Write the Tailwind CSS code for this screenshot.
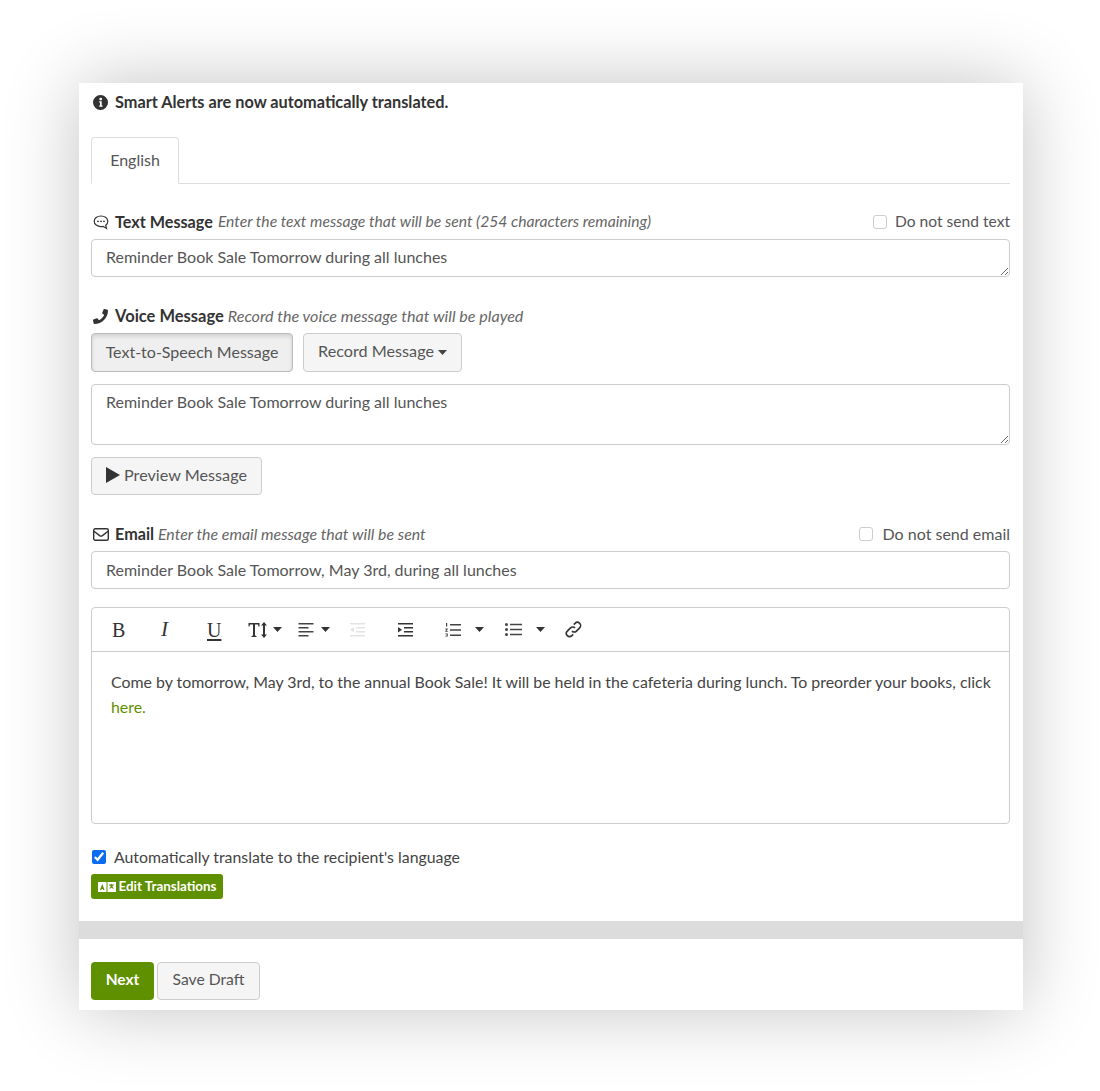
<!DOCTYPE html>
<html lang="en">
<head>
<meta charset="utf-8">
<title>Smart Alert</title>
<script src="https://cdn.jsdelivr.net/npm/@tailwindcss/browser@4"></script>
</head>
<body class="bg-white font-['Lato','Liberation_Sans',sans-serif] text-[#555] h-[1091px] overflow-hidden">
<div class="ml-[79px] pt-[83px] w-[944px]">
  <div class="bg-white h-[927px] shadow-[0_0_70px_rgba(0,0,0,0.24)] flex flex-col">
    <div class="pl-[12px] pr-[13px] flex flex-col">
      <div class="h-[39px] flex items-center gap-[7px] pl-[2px] text-[#333] text-[16.3px] font-bold">
        <svg class="w-[15px] h-[15px]" viewBox="0 0 16 16"><path fill="#333" fill-rule="evenodd" d="M8 0a8 8 0 1 1 0 16A8 8 0 0 1 8 0zM6.600 6.600v1.300h.9v3.400h-.9v1.300h3.600v-1.300h-.9V6.600zM8.200 2.800a1.500 1.500 0 1 0 0 3 1.500 1.500 0 0 0 0-3z"/></svg>
        <span>Smart Alerts are now automatically translated.</span>
      </div>
      <div class="mt-[15px] h-[47px] border-b border-[#ddd] flex">
        <div class="w-[88px] h-[47px] pb-[2px] bg-white border border-[#ddd] border-b-white rounded-t-[4px] flex items-center justify-center text-[16px] text-[#555]">English</div>
      </div>

      <div class="mt-[28px] h-[20px] flex items-center justify-between">
        <div class="flex items-center pl-[2px]">
          <svg class="w-[16px] h-[15px] mr-[6px]" viewBox="0 0 16 15" fill="none" stroke="#333" stroke-width="1.200"><path d="M8 1c3.800 0 6.800 2.300 6.800 5.300 0 1.600-.8 3-2.100 3.900l.8 3.200-3.300-2.100c-.7.200-1.400.3-2.200.3-3.800 0-6.800-2.300-6.800-5.300S4.200 1 8 1z"/><circle cx="5" cy="6.300" r=".9" fill="#333" stroke="none"/><circle cx="8" cy="6.300" r=".9" fill="#333" stroke="none"/><circle cx="11" cy="6.300" r=".9" fill="#333" stroke="none"/></svg>
          <span class="text-[16.2px] font-bold text-[#333]">Text Message</span>
          <span class="ml-[5px] text-[15.68px] italic text-[#666]">Enter the text message that will be sent (254 characters remaining)</span>
        </div>
        <label class="flex items-center text-[15.6px] text-[#555]">
          <span class="w-[14px] h-[14px] border border-[#ccc] rounded-[3px] mr-[8px] bg-white"></span>Do not send text
        </label>
      </div>
      <textarea class="mt-[7px] w-full h-[38px] block border border-[#ccc] rounded-[4px] px-[14px] py-[5px] text-[16px] leading-[24px] text-[#555] bg-white outline-none" rows="1">Reminder Book Sale Tomorrow during all lunches</textarea>

      <div class="mt-[29px] h-[20px] flex items-center pl-[2px]">
        <svg class="w-[15px] h-[15px] mr-[7px]" viewBox="0 0 512 512"><path fill="#333" d="M493.400 24.600l-104-24c-11.300-2.600-22.900 3.300-27.500 13.900l-48 112c-4.200 9.800-1.400 21.300 6.900 28l60.600 49.600c-36 76.700-98.900 140.500-177.200 177.200l-49.600-60.600c-6.800-8.300-18.200-11.100-28-6.900l-112 48C3.900 366.500-2 378.100.6 389.400l24 104C27.100 504.200 36.700 512 48 512c256.100 0 464-207.500 464-464 0-11.200-7.700-20.900-18.600-23.400z"/></svg>
        <span class="text-[16.5px] font-bold text-[#333]">Voice Message</span>
        <span class="ml-[4px] text-[16.1px] italic text-[#666]">Record the voice message that will be played</span>
      </div>
      <div class="mt-[7px] flex gap-[10px]">
        <button class="w-[202px] h-[39px] pb-[2px] bg-[#efefef] border border-[#bbb] rounded-[4px] text-[16px] text-[#555] shadow-[inset_0_2px_4px_rgba(0,0,0,0.14)]">Text-to-Speech Message</button>
        <button class="w-[159px] h-[39px] pb-[2px] bg-[#f5f5f5] border border-[#ccc] rounded-[4px] text-[16.2px] text-[#555] flex items-center justify-center gap-[4px]">Record Message
          <svg class="w-[9px] h-[5px] mt-[2px]" viewBox="0 0 9 5"><path fill="#444" d="M0 0h9L4.500 5z"/></svg>
        </button>
      </div>
      <textarea class="mt-[12px] w-full h-[61px] block border border-[#ccc] rounded-[4px] px-[14px] py-[5px] text-[16px] leading-[24px] text-[#555] bg-white outline-none" rows="2">Reminder Book Sale Tomorrow during all lunches</textarea>
      <button class="mt-[12px] w-[171px] h-[38px] pb-[2px] bg-[#f5f5f5] border border-[#ccc] rounded-[4px] text-[16.2px] text-[#555] flex items-center justify-center gap-[4px]">
        <svg class="w-[14px] h-[16px]" viewBox="0 0 14 16"><path fill="#333" d="M0 0l14 8-14 8z"/></svg>Preview Message
      </button>

      <div class="mt-[29px] h-[20px] flex items-center justify-between">
        <div class="flex items-center pl-[2px]">
          <svg class="w-[16px] h-[13px] mr-[6px]" viewBox="0 0 16 13" fill="none" stroke="#333" stroke-width="1.400"><rect x=".7" y=".7" width="14.600" height="11.600" rx="1.500"/><path d="M1 3.200l5.600 4.400c.8.600 2 .6 2.800 0L15 3.200"/></svg>
          <span class="text-[16.2px] font-bold text-[#333]">Email</span>
          <span class="ml-[4px] text-[15.9px] italic text-[#666]">Enter the email message that will be sent</span>
        </div>
        <label class="flex items-center text-[16px] text-[#555]">
          <span class="w-[14px] h-[14px] border border-[#ccc] rounded-[3px] mr-[10px] bg-white"></span>Do not send email
        </label>
      </div>
      <input class="mt-[7px] w-full h-[38px] pb-[2px] block border border-[#ccc] rounded-[4px] px-[14px] text-[16px] text-[#555] bg-white outline-none" value="Reminder Book Sale Tomorrow, May 3rd, during all lunches">

      <div class="mt-[18px] h-[217px] border border-[#ccc] rounded-[4px] flex flex-col">
        <div class="h-[44px] border-b border-[#ccc] flex items-center pl-[20px]">
          <span class="w-[49px] font-['Liberation_Serif',serif] text-[20px] leading-none text-[#333]">B</span>
          <span class="w-[46px] font-['Liberation_Serif',serif] italic text-[21px] leading-none text-[#333]">I</span>
          <span class="w-[41px] font-['Liberation_Serif',serif] text-[20px] leading-none text-[#333] underline underline-offset-2">U</span>
          <span class="w-[50px] flex items-center">
            <svg class="w-[20px] h-[16px]" viewBox="0 0 20 16" fill="#333"><path d="M.5 1h11v3.500h-1L10 2.500H7v11l1.500.5v1h-5v-1l1.500-.5v-11H2L1.500 4.500h-1z"/><path d="M16 0l3 3.500h-2v9h2L16 16l-3-3.500h2v-9h-2z"/></svg>
            <svg class="w-[9px] h-[5px] ml-[5px]" viewBox="0 0 9 5"><path fill="#333" d="M0 0h9L4.500 5z"/></svg>
          </span>
          <span class="w-[52px] flex items-center">
            <svg class="w-[16px] h-[14px]" viewBox="0 0 15 14" fill="#444"><path d="M0 0h15v1.500H0zM0 4h10v1.500H0zM0 8h15v1.500H0zM0 12h10v1.500H0z"/></svg>
            <svg class="w-[9px] h-[5px] ml-[7px]" viewBox="0 0 9 5"><path fill="#333" d="M0 0h9L4.500 5z"/></svg>
          </span>
          <span class="w-[48px]">
            <svg class="w-[15px] h-[14px]" viewBox="0 0 15 14" fill="#e3e3e3"><path d="M0 0h15v1.500H0zM6 4h9v1.500H6zM6 8h9v1.500H6zM0 12h15v1.500H0zM4 4v5.500L0 6.700z"/></svg>
          </span>
          <span class="w-[47px]">
            <svg class="w-[15px] h-[14px]" viewBox="0 0 15 14" fill="#333"><path d="M0 0h15v1.500H0zM6 4h9v1.500H6zM6 8h9v1.500H6zM0 12h15v1.500H0zM0 4v5.500l4-2.800z"/></svg>
          </span>
          <span class="w-[60px] flex items-center">
            <svg class="w-[16px] h-[14px]" viewBox="0 0 16 14" fill="#444"><path d="M5 1h11v1.500H5zM5 6.200h11v1.500H5zM5 11.500h11V13H5z"/><path d="M1 0h1.200v3.500H1zM.3 5.500h2.400v1L1.500 8h1.300v.8H.3v-.7l1.400-1.700H.3zM.3 10.500h2.500v3H.3v-.7h1.700v-.5H1v-.6h1v-.5H.3z"/></svg>
            <svg class="w-[9px] h-[5px] ml-[14px]" viewBox="0 0 9 5"><path fill="#333" d="M0 0h9L4.500 5z"/></svg>
          </span>
          <span class="w-[60px] flex items-center">
            <svg class="w-[17px] h-[13px]" viewBox="0 0 17 13" fill="#444"><circle cx="1.500" cy="1.500" r="1.500"/><circle cx="1.500" cy="6.500" r="1.500"/><circle cx="1.500" cy="11.500" r="1.500"/><path d="M5 .8h12v1.400H5zM5 5.800h12v1.400H5zM5 10.800h12v1.400H5z"/></svg>
            <svg class="w-[9px] h-[5px] ml-[14px]" viewBox="0 0 9 5"><path fill="#333" d="M0 0h9L4.500 5z"/></svg>
          </span>
          <svg class="w-[17px] h-[17px]" viewBox="0 0 16 16" fill="none" stroke="#333" stroke-width="1.500"><path d="M6.500 9.500a3 3 0 0 0 4.300 0l3-3a3 3 0 0 0-4.300-4.300L8.300 3.400"/><path d="M9.500 6.500a3 3 0 0 0-4.300 0l-3 3a3 3 0 0 0 4.300 4.300l1.200-1.200"/></svg>
        </div>
        <div class="pl-[19px] pr-[10px] pt-[17px] text-[15.9px] leading-[25px] text-[#444]">
          Come by tomorrow, May 3rd, to the annual Book Sale! It will be held in the cafeteria during lunch. To preorder your books, click <span class="text-[#5f9000]">here.</span>
        </div>
      </div>

      <label class="mt-[23px] h-[20px] flex items-center text-[15.85px] text-[#444]">
        <input type="checkbox" checked class="w-[14px] h-[14px] ml-[1px] mr-[8px] accent-[#0b6cf0]">Automatically translate to the recipient's language
      </label>
      <div class="mt-[7px]">
        <button class="w-[132px] h-[25px] bg-[#5f9000] rounded-[3px] text-white text-[13.4px] font-bold flex items-center justify-center gap-[3px]">
          <svg class="w-[18px] h-[10px]" viewBox="0 0 18 10"><path fill="#fff" fill-rule="evenodd" d="M0 0h8.500v10H0zM4.200 2L2 8h1.300l.3-1h1.300l.3 1h1.300L4.300 2zM9.500 0H18v10H9.500zM11 2.500v1h1.300l.4 1.400-1.500 1 .6.900 1.700-1.100 1.700 1.100.6-.9-1.400-1 .5-1.400h1v-1h-2V2h-1v.5z"/></svg>
          Edit Translations
        </button>
      </div>
    </div>
    <div class="mt-[22px] h-[18px] bg-[#dcdcdc]"></div>
    <div class="pl-[12px] pt-[23px] flex gap-[3px]">
      <button class="w-[63px] h-[38px] pb-[2px] bg-[#5f9000] rounded-[4px] text-white text-[15.500px] font-bold">Next</button>
      <button class="w-[103px] h-[38px] pb-[2px] bg-[#f5f5f5] border border-[#ccc] rounded-[4px] text-[15.700px] text-[#555]">Save Draft</button>
    </div>
  </div>
</div>
</body>
</html>
